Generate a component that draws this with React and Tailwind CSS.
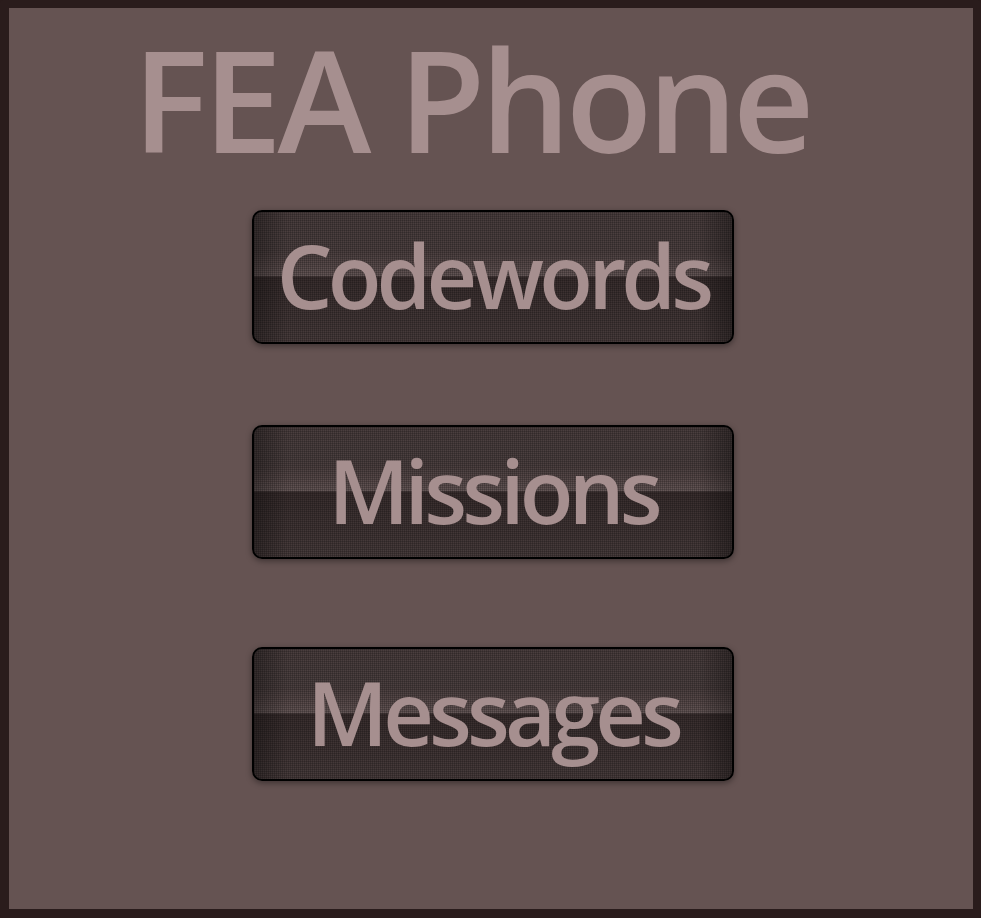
const menu = [
  { label: 'Codewords', gap: 'mt-[27px]' },
  { label: 'Missions', gap: 'mt-[81px]' },
  { label: 'Messages', gap: 'mt-[88px]' },
];

function MenuButton({ label, gap }) {
  return (
    <button
      type="button"
      className={`${gap} ml-[4px] relative w-[482px] h-[134px] rounded-[10px] border-2 border-black overflow-hidden shadow-[0_2px_6px_rgba(0,0,0,0.4)] bg-[linear-gradient(to_bottom,#4a3e3e_0%,#4c4040_30%,#584a4a_40%,#645656_49%,#382d2d_50%,#3d3232_65%,#483c3c_100%)]`}
    >
      {/* dot grid texture */}
      <span className="absolute inset-0 bg-[repeating-linear-gradient(to_right,rgba(0,0,0,0.18)_0px,rgba(0,0,0,0.18)_1px,transparent_1px,transparent_2px),repeating-linear-gradient(to_bottom,rgba(0,0,0,0.18)_0px,rgba(0,0,0,0.18)_1px,transparent_1px,transparent_2px)]" />
      {/* darker sides */}
      <span className="absolute inset-0 bg-[linear-gradient(to_right,rgba(0,0,0,0.3)_0%,transparent_7%,transparent_93%,rgba(0,0,0,0.3)_100%)]" />
      <span className="relative flex h-full items-center justify-center font-['Open_Sans',sans-serif] font-[550] text-[88px] leading-none tracking-[-0.055em] text-[#a68f8f] pb-[4px]">
        {label}
      </span>
    </button>
  );
}

export default function App() {
  return (
    <div className="w-[981px] h-[918px] bg-[#2a1c1c]">
      <div className="h-full rounded-[3px] border-t-[8px] border-l-[9px] border-r-[8px] border-b-[9px] border-[#2a1c1c] bg-[#655352] flex flex-col items-center">
        {/* Title */}
        <h1 className="mt-[5px] mr-[40px] font-['Open_Sans',sans-serif] font-semibold text-[142px] leading-[170px] tracking-[-0.035em] text-[#a68f8f]">
          FEA Phone
        </h1>

        {/* Menu */}
        {menu.map((item) => (
          <MenuButton key={item.label} label={item.label} gap={item.gap} />
        ))}
      </div>
    </div>
  );
}
